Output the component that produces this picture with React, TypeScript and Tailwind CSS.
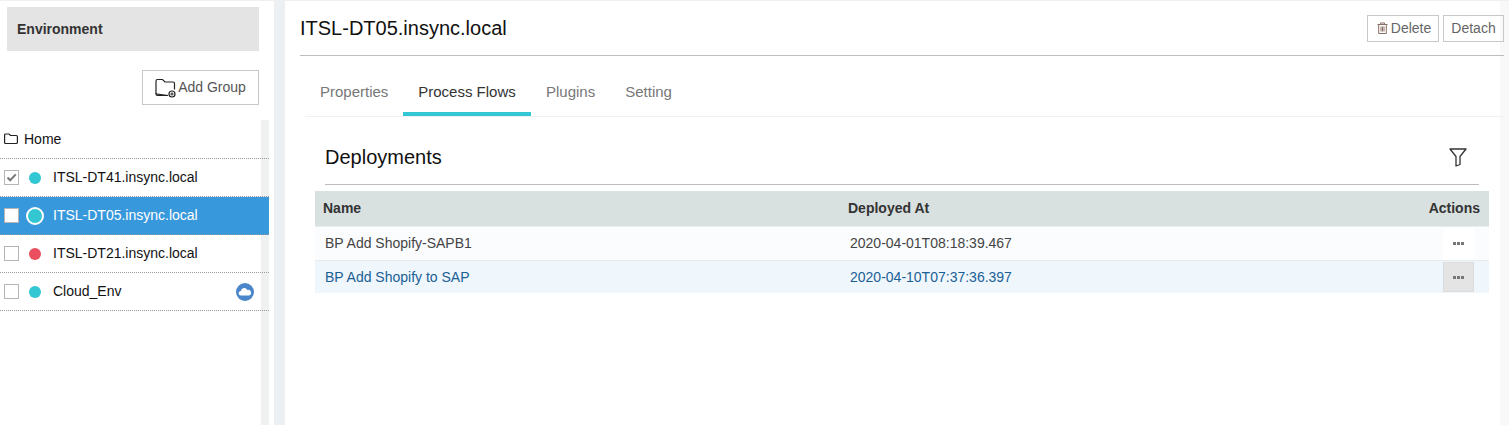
import React from "react";

const font = { fontFamily: '"Liberation Sans", Arial, sans-serif' };

function Dot({ color, ring }: { color: string; ring?: boolean }) {
  return (
    <span
      className={
        ring
          ? "w-[18px] h-[18px] rounded-full border-2 border-white shrink-0 -mx-[3px]"
          : "w-3 h-3 rounded-full shrink-0"
      }
      style={{ backgroundColor: color }}
    />
  );
}

function Row({
  name,
  color,
  checked,
  active,
  cloud,
}: {
  name: string;
  color: string;
  checked?: boolean;
  active?: boolean;
  cloud?: boolean;
}) {
  return (
    <div
      className={
        "h-[38px] flex items-center pl-1 pr-[15px] border-b border-dotted border-[#9a9a9a] text-[14px] " +
        (active ? "bg-[#3898dc] text-white" : "text-[#111]")
      }
    >
      <span className="w-[15px] h-[15px] border border-[#b5b5b5] bg-white flex items-center justify-center shrink-0">
        {checked && (
          <svg width="11" height="11" viewBox="0 0 11 11">
            <path d="M1.5 5.5 L4.2 8.2 L9.8 2.4" fill="none" stroke="#777" strokeWidth="2" />
          </svg>
        )}
      </span>
      <span className="ml-[10px] w-3 flex justify-center mr-[12px]">
        <Dot color={color} ring={active} />
      </span>
      <span className="flex-1">{name}</span>
      {cloud && (
        <svg width="18" height="18" viewBox="0 0 18 18">
          <circle cx="9" cy="9" r="9" fill="#4a86c8" />
          <path
            d="M5 12.5 a2.3 2.3 0 0 1 -.2 -4.6 a3.4 3.4 0 0 1 6.5 -.9 a2.8 2.8 0 0 1 1.7 5.5 z"
            fill="#fff"
          />
        </svg>
      )}
    </div>
  );
}

function Dots() {
  return (
    <span className="flex gap-px">
      <span className="w-[3px] h-[3px] bg-[#777]" />
      <span className="w-[3px] h-[3px] bg-[#777]" />
      <span className="w-[3px] h-[3px] bg-[#777]" />
    </span>
  );
}

export default function App() {
  return (
    <div style={font} className="h-[425px] w-[1509px] overflow-hidden bg-[#f8f8f8] flex flex-col">
      <div className="h-px bg-[#f0f0f0]" />
      <div className="flex flex-1 min-h-0">
        <aside className="w-[274px] bg-white shrink-0 pt-[6px]">
          <div className="ml-[7px] w-[252px] h-[44px] bg-[#e4e4e4] flex items-center pl-[10px] font-bold text-[14px] text-[#333]">
            Environment
          </div>
          <div className="flex justify-end w-[259px] mt-[19px]">
            <button className="w-[117px] h-[35px] border border-[#c8c8c8] bg-white flex items-center justify-center text-[14px] text-[#555]">
              <svg width="24" height="20" viewBox="0 0 24 20" className="-mr-px">
                <path
                  d="M1 3 a1.5 1.5 0 0 1 1.5 -1.5 h5 l2.5 2.5 h8 a1.5 1.5 0 0 1 1.5 1.5 v6 M13 17.5 h-10.5 a1.5 1.5 0 0 1 -1.5 -1.5 z"
                  fill="none"
                  stroke="#222"
                  strokeWidth="1.2"
                />
                <path d="M1 3 v13" stroke="#222" strokeWidth="1.2" />
                <circle cx="17" cy="16" r="3" fill="none" stroke="#222" strokeWidth="1.2" />
                <path d="M15.4 16 h3.2 M17 14.4 v3.2" stroke="#222" strokeWidth="1" />
              </svg>
              Add Group
            </button>
          </div>
          <div className="mt-[15px] w-[269px] h-[305px] flex">
            <div className="w-full relative">
              <div className="absolute right-0 top-0 bottom-0 w-2 bg-[#eff1f1]" />
              <div className="relative">
                <div className="h-[39px] flex items-center pl-1 border-b border-dotted border-[#9a9a9a] text-[14px] text-[#111]">
                  <svg width="14" height="12" viewBox="0 0 14 12" className="mr-[6px]">
                    <path
                      d="M.6 2 a1 1 0 0 1 1 -1 h3.4 l1.5 1.5 h5.9 a1 1 0 0 1 1 1 v6 a1 1 0 0 1 -1 1 h-10.8 a1 1 0 0 1 -1 -1 z"
                      fill="none"
                      stroke="#222"
                      strokeWidth="1.2"
                    />
                  </svg>
                  Home
                </div>
                <Row name="ITSL-DT41.insync.local" color="#33c6d3" checked />
                <Row name="ITSL-DT05.insync.local" color="#33c6d3" active />
                <Row name="ITSL-DT21.insync.local" color="#ea4f5f" />
                <Row name="Cloud_Env" color="#33c6d3" cloud />
              </div>
            </div>
          </div>
        </aside>
        <div className="w-[11px] bg-[#edf0f3] shrink-0" />
        <main className="w-[1215px] bg-white shrink-0 pl-[15px]">
          <header className="w-[1204px] h-[55px] border-b border-[#bdbdbd] flex items-center justify-between">
            <h1 className="text-[20px] text-[#111]">ITSL-DT05.insync.local</h1>
            <div className="flex gap-1">
              <button className="w-[72px] h-[27px] pl-[2px] border border-[#c8c8c8] flex items-center justify-center text-[14px] text-[#666]">
                <svg width="11" height="12" viewBox="0 0 11 12" className="mr-[3px]">
                  <path
                    d="M.5 2.5 h10 M3.5 2.5 v-1.5 h4 v1.5 M1.7 2.5 v9 h7.6 v-9 M4 4.5 v5 M5.5 4.5 v5 M7 4.5 v5"
                    fill="none"
                    stroke="#8a6f66"
                    strokeWidth="1"
                  />
                </svg>
                Delete
              </button>
              <button className="w-[61px] h-[27px] border border-[#c8c8c8] flex items-center justify-center text-[14px] text-[#666]">
                Detach
              </button>
            </div>
          </header>
          <nav className="ml-[5px] w-[1199px] h-[61px] border-b border-[#eef0f3] flex items-end text-[15px] text-[#777]">
            <span className="w-[98px] pl-[15px] h-[44px] border-b-4 border-transparent pt-[1px] flex items-center">Properties</span>
            <span className="w-[128px] h-[44px] flex items-center justify-center border-b-4 border-[#33c6d3] pt-[1px] text-[#333]">
              Process Flows
            </span>
            <span className="ml-[15px] h-[44px] border-b-4 border-transparent pt-[1px] flex items-center">Plugins</span>
            <span className="ml-[30px] h-[44px] border-b-4 border-transparent pt-[1px] flex items-center">Setting</span>
          </nav>
          <section className="pl-[15px] w-[1189px]">
            <div className="ml-[10px] w-[1154px] h-[68px] border-b border-[#bdbdbd] flex items-center justify-between pt-[13px]">
              <h2 className="text-[20px] text-[#111]">Deployments</h2>
              <svg width="18" height="19" viewBox="0 0 18 19" className="mr-[12px]">
                <path
                  d="M1 1 h16 l-6 7.5 v8 l-4 1.5 v-9.5 z"
                  fill="none"
                  stroke="#333"
                  strokeWidth="1.3"
                  strokeLinejoin="round"
                />
              </svg>
            </div>
            <div className="mt-[6px] w-[1174px] text-[14px]">
              <div className="h-[36px] bg-[#d8e0e0] flex items-center font-bold text-[#333] border-b border-[#e8edf0]">
                <span className="w-[533px] pl-2">Name</span>
                <span className="flex-1">Deployed At</span>
                <span className="pr-[9px]">Actions</span>
              </div>
              <div className="h-[34px] bg-[#fbfcfe] flex items-center text-[#444] border-b border-[#e6ebee]">
                <span className="w-[535px] pl-[10px]">BP Add Shopify-SAPB1</span>
                <span className="flex-1">2020-04-01T08:18:39.467</span>
                <span className="w-[31px] h-[32px] mr-[15px] bg-white flex items-center justify-center">
                  <Dots />
                </span>
              </div>
              <div className="h-[32px] bg-[#eff6fc] flex items-center text-[#1a5f96]">
                <span className="w-[535px] pl-[10px]">BP Add Shopify to SAP</span>
                <span className="flex-1">2020-04-10T07:37:36.397</span>
                <span className="w-[31px] h-[30px] mr-[15px] bg-[#e4e4e4] border border-[#dcdcdc] flex items-center justify-center">
                  <Dots />
                </span>
              </div>
            </div>
          </section>
        </main>
      </div>
    </div>
  );
}
